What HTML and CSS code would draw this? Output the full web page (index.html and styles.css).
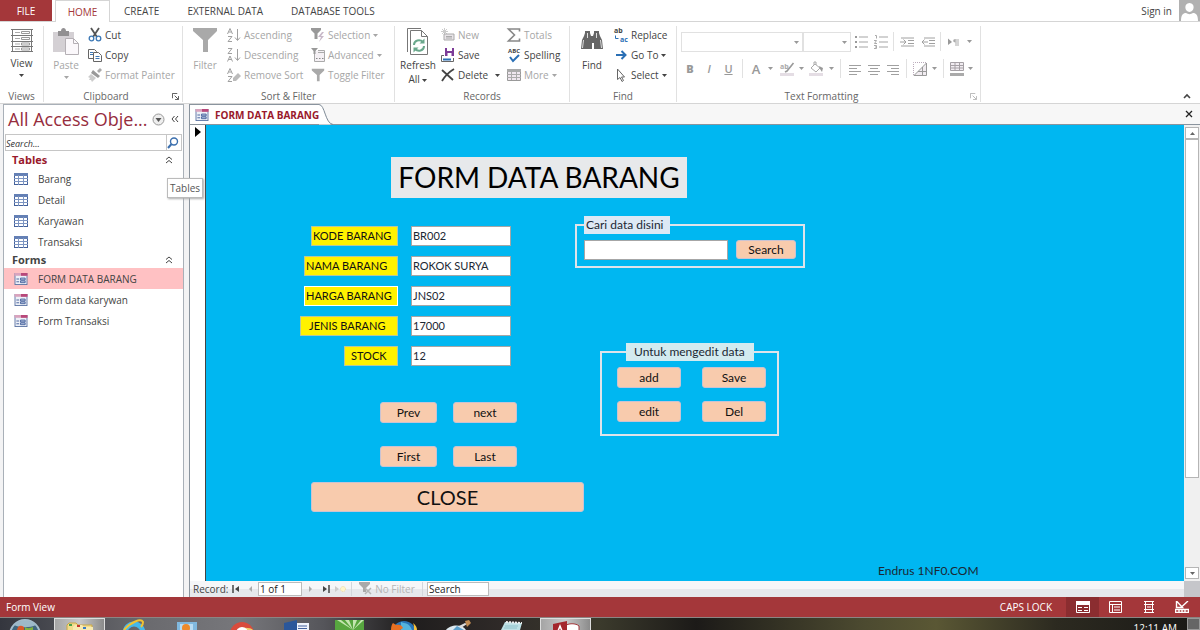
FILE: index.html
```html
<!DOCTYPE html>
<html lang="id">
<head>
    <meta charset="UTF-8">
    <meta name="viewport" content="width=device-width, initial-scale=1.0">
    <title>FORM DATA BARANG</title>
    <link rel="stylesheet" href="styles.css">
</head>
<body>
    <!-- shared icons -->
    <svg class="sprite" width="0" height="0">
        <symbol id="caret" viewBox="0 0 5 3"><path d="M0 0h5L2.5 3z" fill="currentColor"/></symbol>
        <symbol id="funnel" viewBox="0 0 24 24"><path d="M0 0h24v3l-9 9v12h-5V12L0 3z" fill="#a9a9a9"/></symbol>
        <symbol id="tableIcon" viewBox="0 0 14 12">
            <rect x=".5" y=".5" width="13" height="11" fill="#fff" stroke="#44619b"/>
            <path d="M0 0h14v3H0z" fill="#6480b5"/>
            <path d="M0 5.500h14M0 8.500h14M4.500 2v10M9.500 2v10" stroke="#7d95c2"/>
        </symbol>
        <symbol id="formIcon" viewBox="0 0 14 13">
            <rect x=".5" y=".5" width="13" height="12" fill="#eef1f8" stroke="#5f76a5"/>
            <path d="M0 0h14v3H0z" fill="#d9a3bd"/>
            <path d="M7 0h7v3H7z" fill="#b8487a"/>
            <path d="M2 6.500h3M2 9.500h3" stroke="#44619b"/>
            <path d="M6.500 5.500h5v2h-5zM6.500 8.500h5v2h-5z" fill="#c4cfe6" stroke="#44619b"/>
        </symbol>
        <symbol id="chevrons" viewBox="0 0 8 8"><path d="M1 3.500L4 1l3 2.500M1 7l3-2.500L7 7" fill="none" stroke="#444"/></symbol>
        <symbol id="launcher" viewBox="0 0 8 8"><path d="M.5 6V.5H6M3 3l4 4M7.500 3.500v4h-4" fill="none" stroke="currentColor"/></symbol>
    </svg>

    <nav class="tabs">
        <button class="tab file">FILE</button>
        <button class="tab active">HOME</button>
        <button class="tab">CREATE</button>
        <button class="tab">EXTERNAL DATA</button>
        <button class="tab">DATABASE TOOLS</button>
        <a class="signin" href="#">Sign in
            <svg width="21" height="21" viewBox="0 0 21 21"><path d="M0 0h21v21H0z" fill="#b1b1b1"/><path d="M10.500 3c6 0 5 9 0 9s-6-9 0-9zM2 21c0-6 2-8 5-8 2 1.500 5 1.500 7 0 3 0 5 2 5 8z" fill="#fff"/></svg>
        </a>
    </nav>

    <div class="ribbon">
        <section class="group views">
            <div class="tools">
                <button class="big">
                    <svg width="24" height="26" viewBox="0 0 24 26"><g fill="none" stroke="#777"><path d="M2.500 1v23M21.500 1v23M1 1.500h22M1 7.500h22M1 13.500h22M1 18.500h22M1 23.500h22"/><path d="M5 4.500h5M5 10.500h5M5 16h5M5 21h5" stroke="#aaa"/><path d="M11.500 3.500h8v2h-8zM11.500 9.500h8v2h-8zM11.500 15h8v2h-8zM11.500 20h8v2h-8z" stroke="#999"/></g></svg>
                    <span>View</span>
                    <svg class="caret"><use href="#caret"/></svg>
                </button>
            </div>
            <h2>Views</h2>
        </section>
        <section class="group clipboard">
            <div class="tools">
                <button class="big off">
                    <svg width="26" height="28" viewBox="0 0 26 28"><path d="M0 4h21v20H0z" fill="#d4d0d4"/><path d="M5 3h3c0-4 5-4 5 0h3v5H5z" fill="#929092"/><path d="M12.500 10.500h8l5 5v11h-13z" fill="#fbf8fb" stroke="#b5b0b5"/><path d="M20.500 10.500v5h5" fill="none" stroke="#b5b0b5"/></svg>
                    <span>Paste</span>
                    <svg class="caret"><use href="#caret"/></svg>
                </button>
                <div class="col">
                    <button><svg class="ico" viewBox="0 0 14 14"><path d="M3 0l6 9M11 0L5 9" stroke="#555" stroke-width="1.800"/><g fill="none" stroke="#3c78b5" stroke-width="1.300"><circle cx="3.500" cy="10.500" r="2.300"/><circle cx="10.500" cy="10.500" r="2.300"/></g></svg>Cut</button>
                    <button><svg class="ico" viewBox="0 0 14 14"><g fill="#fff" stroke="#666"><path d="M.5 1.500h6l2 2v7h-8z"/><path d="M5.500 4.500h5l3 3v6h-8z"/></g><path d="M2 4.500h3M2 6.500h3M7.500 8.500h4M7.500 10.500h4" stroke="#3c78b5"/></svg>Copy</button>
                    <button class="off"><svg class="ico" viewBox="0 0 14 14"><path d="M9 3l3-3 2 2-3 3z" fill="#aaa"/><path d="M5 2l7 6-2 2-7-5z" fill="#999"/><path d="M3 6l5 4-4 4-1-2-2 0 1-2-2-1z" fill="#ccc"/></svg>Format Painter</button>
                </div>
            </div>
            <h2>Clipboard</h2>
            <svg class="launch"><use href="#launcher"/></svg>
        </section>
        <section class="group sort">
            <div class="tools">
                <button class="big off mid">
                    <svg width="24" height="24"><use href="#funnel"/></svg>
                    <span>Filter</span>
                </button>
                <div class="col">
                    <button class="off"><svg class="ico" viewBox="0 0 14 14"><path d="M.5 6L3 .5 5.500 6M1.500 4h3M1 8.500h4L1 13.500h4M10.500 1v11M8 9.500l2.500 3 2.500-3" fill="none" stroke="#a0a0a0"/></svg>Ascending</button>
                    <button class="off"><svg class="ico" viewBox="0 0 14 14"><path d="M1 .5h4L1 5.500h4M.5 13.500L3 8l2.500 5.500M1.500 11.500h3M10.500 1v11M8 9.500l2.500 3 2.500-3" fill="none" stroke="#a0a0a0"/></svg>Descending</button>
                    <button class="off"><svg class="ico" viewBox="0 0 14 14"><path d="M.5 6L3 .5 5.500 6M1.500 4h3M1 8.500h4L1 13.500h4" fill="none" stroke="#a0a0a0"/><path d="M11 5l3 3-5 5H6v-3z" fill="#bbb"/></svg>Remove Sort</button>
                </div>
                <div class="col">
                    <button class="off"><svg class="ico" viewBox="0 0 14 14"><path d="M0 0h10v2L6.500 5.500V11h-3V5.500L0 2z" fill="#999"/><path d="M11 4l-4 5h3l-2 5 5-6h-3l3-4z" fill="#c8b8c8"/></svg>Selection<svg class="caret"><use href="#caret"/></svg></button>
                    <button class="off"><svg class="ico" viewBox="0 0 14 14"><path d="M3.500 4v9.500h10v-11H7M7 4.500h6" fill="#f4f0f4" stroke="#aaa"/><path d="M0 0h7L4.500 3v3h-2V3z" fill="#999"/><path d="M5 10.500h1.500M8 10.500h1.500M11 10.500h1.500" stroke="#888"/></svg>Advanced<svg class="caret"><use href="#caret"/></svg></button>
                    <button class="off"><svg class="ico" viewBox="0 0 26 26"><use href="#funnel" width="24" height="24" x="1" y="1"/></svg>Toggle Filter</button>
                </div>
            </div>
            <h2>Sort &amp; Filter</h2>
        </section>
        <section class="group records">
            <div class="tools">
                <button class="big">
                    <svg width="24" height="28" viewBox="0 0 24 28"><path d="M1.500 24V.5H15" fill="none" stroke="#777"/><path d="M4.500 2.500h11l6 6v18h-17z" fill="#fff" stroke="#777"/><path d="M15.500 2.500v6h6" fill="none" stroke="#777"/><path d="M8 17c0-5 6-6 9-3M18 18c0 5-6 6-9 3" fill="none" stroke="#6aa88c" stroke-width="2"/><path d="M18.500 10.500v5h-5zM7.500 24.500v-5h5z" fill="#6aa88c"/></svg>
                    <span>Refresh<br>All <svg class="caret"><use href="#caret"/></svg></span>
                </button>
                <div class="col">
                    <button class="off"><svg class="ico" viewBox="0 0 14 14"><path d="M3.500 0v7M0 3.500h7M1 1l5 5M6 1L1 6" stroke="#ccc"/><path d="M3 6h10v6H3z" fill="#e8e4e8" stroke="#aaa"/><path d="M5 8.500h6M5 10h6" stroke="#aaa"/></svg>New</button>
                    <button><svg class="ico" viewBox="0 0 14 14"><path d="M4 0h9v8H4z" fill="#7d3c98"/><path d="M6 0h5v3H6zM6.500 5h4v3h-4z" fill="#fff"/><path d="M3 7.500H.5v6h12V10" fill="none" stroke="#666"/><path d="M2 11.500h8" stroke="#2a6fb5" stroke-width="2"/></svg>Save</button>
                    <button><svg class="ico" viewBox="0 0 14 14"><path d="M1 2l11 10M13 1C8 4 4 8 1 13" fill="none" stroke="#444" stroke-width="1.800"/></svg>Delete<svg class="caret far"><use href="#caret"/></svg></button>
                </div>
                <div class="col">
                    <button class="off"><svg class="ico" viewBox="0 0 14 14"><path d="M12.500 3.500V1H1.500l6 6-6 6h11v-2.500" fill="none" stroke="#888" stroke-width="1.600"/></svg>Totals</button>
                    <button><svg class="ico" viewBox="0 0 14 14"><text x="1" y="5" class="abc">ABC</text><path d="M3 9l3 4 6-6" fill="none" stroke="#2a6fb5" stroke-width="2"/></svg>Spelling</button>
                    <button class="off"><svg class="ico" viewBox="0 0 14 14"><path d="M.5 1.500h13v11H.5z" fill="#eee6ee" stroke="#999"/><path d="M0 1h14v3H0z" fill="#aaa"/><path d="M0 6.500h14M0 9.500h14M4.500 4v8M9.500 4v8" stroke="#aaa"/></svg>More<svg class="caret"><use href="#caret"/></svg></button>
                </div>
            </div>
            <h2>Records</h2>
        </section>
        <section class="group find">
            <div class="tools">
                <button class="big mid">
                    <svg width="24" height="24" viewBox="0 0 24 24"><path d="M5 3h5v2l1 3h2l1-3V3h5v2l1 3 2 4 1 9h-9v-6h-2v6H1l1-9 2-4 1-3z" fill="#666"/><path d="M3.500 12L2.500 20M20.500 12l1 8M7.500 5v5M16.500 5v5" stroke="#ddd"/></svg>
                    <span>Find</span>
                </button>
                <div class="col">
                    <button><svg class="ico" viewBox="0 0 14 14"><text x="0" y="5" class="ab">ab</text><text x="6" y="14" class="ab blue">ac</text><path d="M1.500 7.500v3h3" fill="none" stroke="#2a6fb5"/></svg>Replace</button>
                    <button><svg class="ico" viewBox="0 0 14 14"><path d="M2 7h9M7.500 3l4 4-4 4" fill="none" stroke="#2a6fb5" stroke-width="2"/></svg>Go To<svg class="caret"><use href="#caret"/></svg></button>
                    <button><svg class="ico" viewBox="0 0 14 14"><path d="M3.500 1v10.500l2.500-2 2 4 1.500-1-2-3.500h3z" fill="#fff" stroke="#666"/></svg>Select<svg class="caret"><use href="#caret"/></svg></button>
                </div>
            </div>
            <h2>Find</h2>
        </section>
        <section class="group text">
            <div class="tools">
                <div class="row fonts">
                    <label class="combo"><select aria-label="Font"><option></option></select><svg class="caret"><use href="#caret"/></svg></label>
                    <label class="combo"><select aria-label="Font Size"><option></option></select><svg class="caret"><use href="#caret"/></svg></label>
                    <button aria-label="Bullets"><svg class="ico" viewBox="0 0 14 14"><path d="M5 2h9M5 7h9M5 12h9" stroke="#a5a5a5"/><path d="M1 1h2v2H1zM1 6h2v2H1zM1 11h2v2H1z" fill="#999"/></svg></button>
                    <button aria-label="Numbering"><svg class="ico" viewBox="0 0 14 14"><path d="M5 2h9M5 7h9M5 12h9" stroke="#a5a5a5"/><path d="M1 .5h1.500v3M0 5.500h2.500L.5 8.500H3M0 10.500h2.500v3H0M1 12h1" fill="none" stroke="#aaa"/></svg></button>
                    <i class="sep"></i>
                    <button aria-label="Increase indent"><svg class="ico" viewBox="0 0 14 14"><path d="M1 3h13M8 5.500h6M8 8.500h6M1 11h13M0 7h6M3.500 4.500L6 7 3.500 9.500" fill="none" stroke="#a0a0a0"/></svg></button>
                    <button aria-label="Decrease indent"><svg class="ico" viewBox="0 0 14 14"><path d="M3 3h11M8 5.500h6M8 8.500h6M3 11h11M1 7h6M3.500 4.500L1 7l2.500 2.500" fill="none" stroke="#a0a0a0"/></svg></button>
                    <i class="sep"></i>
                    <button aria-label="Text direction"><svg class="ico" viewBox="0 0 14 14"><path d="M1 3.500L5 7l-4 3z" fill="#999"/><path d="M12 4H8.500c-3 0-3 3.500 0 3.500V4z" fill="#aaa"/><path d="M9 4v7M11 4v7" stroke="#aaa"/></svg></button>
                    <svg class="caret"><use href="#caret"/></svg>
                </div>
                <div class="row styles">
                    <button><b>B</b></button>
                    <button><em>I</em></button>
                    <button><u>U</u></button>
                    <i class="sep"></i>
                    <button class="letter">A</button>
                    <svg class="caret"><use href="#caret"/></svg>
                    <button aria-label="Highlight"><svg class="ico" viewBox="0 0 14 14"><path d="M0 11h14v3H0z" fill="#e4dde4"/><text x="0" y="7" class="ab dim">ab</text><path d="M13.500 1L7 9l-2 1" fill="none" stroke="#999" stroke-width="1.600"/></svg></button>
                    <svg class="caret"><use href="#caret"/></svg>
                    <button aria-label="Fill colour"><svg class="ico" viewBox="0 0 14 14"><path d="M0 11h14v3H0z" fill="#e4dde4"/><path d="M2 6l4-4 5 4-4 4zM5 3V0h2v3" fill="#fff" stroke="#aaa"/><path d="M10 4l4 2-1 4-2-3z" fill="#999"/></svg></button>
                    <svg class="caret"><use href="#caret"/></svg>
                    <i class="sep"></i>
                    <button aria-label="Align left"><svg class="ico" viewBox="0 0 14 14"><path d="M1 3.500h12M1 6.500h8M1 9.500h12M1 12.500h8" stroke="#a0a0a0"/></svg></button>
                    <button aria-label="Center"><svg class="ico" viewBox="0 0 14 14"><path d="M1 3.500h12M3 6.500h8M1 9.500h12M3 12.500h8" stroke="#a0a0a0"/></svg></button>
                    <button aria-label="Align right"><svg class="ico" viewBox="0 0 14 14"><path d="M1 3.500h12M5 6.500h8M1 9.500h12M5 12.500h8" stroke="#a0a0a0"/></svg></button>
                    <i class="sep"></i>
                    <button aria-label="Gridlines"><svg class="ico" viewBox="0 0 14 14"><path d="M.5 13V.5H13" fill="none" stroke="#b9a9b9" stroke-dasharray="1 1"/><path d="M1 13.500L13.500 1v12.500zM5 9.500h8M9.500 5v8" fill="#f1ecf1" stroke="#999"/></svg></button>
                    <svg class="caret"><use href="#caret"/></svg>
                    <i class="sep"></i>
                    <button aria-label="Alternate row colour"><svg class="ico" viewBox="0 0 14 14"><path d="M.5.5h13v8H.5zM0 3.500h14M0 6h14M5 0v8M9.500 0v8" fill="#f1ecf1" stroke="#a5a0a5"/><path d="M0 11h14v3H0z" fill="#aaa"/></svg></button>
                    <svg class="caret"><use href="#caret"/></svg>
                </div>
            </div>
            <h2>Text Formatting</h2>
            <svg class="launch"><use href="#launcher"/></svg>
        </section>
        <button class="collapse" aria-label="Collapse"><svg width="8" height="6" viewBox="0 0 8 6"><path d="M1 5l3-3 3 3" fill="none" stroke="#444" stroke-width="1.600"/></svg></button>
    </div>

    <main class="workspace">
        <aside class="navpane">
            <header>
                <h1>All Access Obje...</h1>
                <button aria-label="Filter objects"><svg width="13" height="13" viewBox="0 0 13 13"><circle cx="6.500" cy="6.500" r="5.500" fill="#eee" stroke="#999"/><path d="M3.500 5h6l-3 4z" fill="#555"/></svg></button>
                <button aria-label="Close pane"><svg width="8" height="8" viewBox="0 0 8 8"><path d="M3.500 1L1 4l2.500 3M7 1L4.500 4 7 7" fill="none" stroke="#444"/></svg></button>
            </header>
            <div class="search">
                <input type="text" placeholder="Search..." aria-label="Search objects">
                <button aria-label="Go"><svg width="12" height="12" viewBox="0 0 12 12"><circle cx="7" cy="4.500" r="3.500" fill="none" stroke="#3b6fae" stroke-width="1.400"/><path d="M4.500 7L1 11" stroke="#3b6fae" stroke-width="2"/></svg></button>
            </div>
            <h3 class="red">Tables <svg width="8" height="8"><use href="#chevrons"/></svg></h3>
            <ul>
                <li><svg class="obj"><use href="#tableIcon"/></svg>Barang</li>
                <li><svg class="obj"><use href="#tableIcon"/></svg>Detail</li>
                <li><svg class="obj"><use href="#tableIcon"/></svg>Karyawan</li>
                <li><svg class="obj"><use href="#tableIcon"/></svg>Transaksi</li>
            </ul>
            <h3>Forms <svg width="8" height="8"><use href="#chevrons"/></svg></h3>
            <ul>
                <li class="selected"><svg class="obj"><use href="#formIcon"/></svg>FORM DATA BARANG</li>
                <li><svg class="obj"><use href="#formIcon"/></svg>Form data karywan</li>
                <li><svg class="obj"><use href="#formIcon"/></svg>Form Transaksi</li>
            </ul>
            <div class="tooltip">Tables</div>
        </aside>

        <div class="document">
            <div class="doctabs">
                <div class="doctab"><svg class="obj"><use href="#formIcon"/></svg>FORM DATA BARANG</div>
                <svg width="14" height="21" viewBox="0 0 14 21"><path d="M0 0c6 0 5 20 13 20.500H0z" fill="#fff"/><path d="M0 .5c6 0 6 19 14 20" fill="none" stroke="#7f8b97"/></svg>
                <button class="closedoc" aria-label="Close form"><svg width="8" height="8" viewBox="0 0 8 8"><path d="M1 1l6 6M7 1L1 7" stroke="#222" stroke-width="1.300"/></svg></button>
            </div>
            <div class="formview">
                <div class="selector"><svg width="6" height="10" viewBox="0 0 6 10"><path d="M0 0l6 5-6 5z"/></svg></div>
                <form class="canvas">
                    <h2 class="title">FORM DATA BARANG</h2>
                    <div class="columns">
                        <div class="left">
                            <div class="fields">
                                <label class="kode" for="kode">KODE BARANG</label><input id="kode" type="text" value="BR002">
                                <label class="nama" for="nama">NAMA BARANG</label><input id="nama" type="text" value="ROKOK SURYA">
                                <label class="nama harga" for="harga">HARGA BARANG</label><input id="harga" type="text" value="JNS02">
                                <label class="jenis" for="jenis">JENIS BARANG</label><input id="jenis" type="text" value="17000">
                                <label class="stock" for="stock">STOCK</label><input id="stock" type="text" value="12">
                            </div>
                            <div class="moves">
                                <button type="button">Prev</button>
                                <button type="button">next</button>
                                <button type="button">First</button>
                                <button type="button">Last</button>
                            </div>
                        </div>
                        <div class="right">
                            <fieldset class="cari">
                                <legend>Cari data disini</legend>
                                <input type="text" aria-label="Cari data disini">
                                <button type="button">Search</button>
                            </fieldset>
                            <fieldset class="edit">
                                <legend>Untuk mengedit data</legend>
                                <button type="button">add</button>
                                <button type="button">Save</button>
                                <button type="button">edit</button>
                                <button type="button">Del</button>
                            </fieldset>
                        </div>
                    </div>
                    <button class="close" type="button">CLOSE</button>
                    <p class="credit">Endrus 1NF0.COM</p>
                </form>
                <div class="scrollbar">
                    <span class="arrow"><svg class="caret up"><use href="#caret"/></svg></span>
                    <span class="thumb"></span>
                    <span class="arrow down"><svg class="caret"><use href="#caret"/></svg></span>
                </div>
            </div>
            <div class="recordbar">
                <label for="rec">Record:</label>
                <button aria-label="First record"><svg width="8" height="8" viewBox="0 0 8 8"><path d="M1 0v8" stroke="#444" stroke-width="1.500"/><path d="M7 1v6L3 4z" fill="#444"/></svg></button>
                <button aria-label="Previous record"><svg width="8" height="8" viewBox="0 0 8 8"><path d="M5 1v6L2 4z" fill="#aaa"/></svg></button>
                <input id="rec" class="rec" type="text" value="1 of 1">
                <button aria-label="Next record"><svg width="8" height="8" viewBox="0 0 8 8"><path d="M2 1v6l3-3z" fill="#aaa"/></svg></button>
                <button aria-label="Last record"><svg width="8" height="8" viewBox="0 0 8 8"><path d="M7 0v8" stroke="#444" stroke-width="1.500"/><path d="M1 1v6l4-3z" fill="#444"/></svg></button>
                <button aria-label="New record"><svg width="12" height="8" viewBox="0 0 12 8"><path d="M0 1v6l4-3z" fill="#ccc"/><circle cx="8" cy="4" r="2.500" fill="#fff5cc" stroke="#ecd9a0" stroke-dasharray="1 1"/></svg></button>
                <button class="nofilter"><svg width="13" height="13" viewBox="0 0 13 13"><path d="M0 0h11v2L7 6v4H4V6L0 2z" fill="#a9a9a9"/><path d="M6 6l6 6M12 6l-6 6" stroke="#b5b5b5" stroke-width="1.500"/></svg>No Filter</button>
                <input class="find" type="text" value="Search" aria-label="Search records">
                <span class="corner"></span>
            </div>
        </div>
    </main>

    <footer class="statusbar">
        <span>Form View</span>
        <span class="caps">CAPS LOCK</span>
        <button class="on" aria-label="Form View"><svg width="14" height="12" viewBox="0 0 14 12"><path d="M.5.5h13v11H.5z" fill="none" stroke="#fff"/><path d="M0 0h14v4H0z" fill="#fff"/><path d="M2 6.500h4M2 9.500h4M8 6.500h4M8 9.500h4" stroke="#fff"/></svg></button>
        <button aria-label="Layout View"><svg width="14" height="12" viewBox="0 0 14 12"><path d="M.5.5h12v11H.5zM.5 3.500h12M3.500 3v9M5 6h6M5 9h6" fill="none" stroke="#fff"/></svg></button>
        <button aria-label="Report View"><svg width="14" height="12" viewBox="0 0 14 12"><path d="M2 .5h10M2 3.500h10M2 8.500h10M2 11.500h10M3.500 0v12M10.500 0v12M5 6h4" fill="none" stroke="#fff"/></svg></button>
        <button aria-label="Design View"><svg width="14" height="12" viewBox="0 0 14 12"><path d="M1.500 0v6.500h6zM13 0L6 6.500M.5 8.500h13v3H.5zM4 9v2M7 9v2M10 9v2" fill="none" stroke="#fff" stroke-width="1.400"/></svg></button>
    </footer>

    <div class="taskbar">
        <span class="orb"><svg width="34" height="12" viewBox="0 0 34 12"><circle cx="17" cy="17" r="15" fill="#41677f" stroke="#a5bccb" stroke-width="2"/><path d="M6 7c4-6 18-6 22 0-6 3-16 3-22 0z" fill="#9db9c9"/><path d="M9 12c1-5 4-5 7-3v3z" fill="#d9582b"/><path d="M17 12V9c3 2 5 1 8 0v3z" fill="#83b13d"/></svg></span>
        <span class="app open"><svg width="34" height="12" viewBox="0 0 34 12"><path d="M4 12V6l2-2h7l2 2h14v6z" fill="#f1dc8c" stroke="#c9a646"/><path d="M10 8l2-2h7l2 2h9v4H10z" fill="#f8eab0"/><path d="M6 5h3v2H6z" fill="#49a24b"/><path d="M14 6h3v2h-3z" fill="#c8372d"/><path d="M20 8h3v2h-3z" fill="#3a7cc4"/></svg></span>
        <span class="app"><svg width="34" height="12" viewBox="0 0 34 12"><circle cx="17" cy="15" r="9" fill="none" stroke="#45b8ea" stroke-width="5"/><path d="M7 12C14 4 24 0 26 4c0 2-1 4-2 5" fill="none" stroke="#f2c230" stroke-width="2"/></svg></span>
        <span class="app"><svg width="34" height="12" viewBox="0 0 34 12"><path d="M6 4h20v8H6z" fill="#80b8de"/><path d="M9 6h13v6H9z" fill="#b9dcf2"/><circle cx="15" cy="10" r="4" fill="#ed8a2b"/></svg></span>
        <span class="app"><svg width="34" height="12" viewBox="0 0 34 12"><circle cx="17" cy="16" r="12" fill="#d94b3c"/><path d="M14 12c0-3 12-3 14 0z" fill="#eed06d"/><circle cx="17" cy="15" r="6" fill="#fff"/></svg></span>
        <span class="app"><svg width="34" height="12" viewBox="0 0 34 12"><path d="M17 5h13v7H17z" fill="#eef2fa"/><path d="M19 8h9M19 10.500h9" stroke="#44619b"/><path d="M5 5l13-3v10H5z" fill="#2b579a"/></svg></span>
        <span class="app"><svg width="34" height="12" viewBox="0 0 34 12"><path d="M2 2h29v10H2z" fill="#57a63f"/><path d="M20 12L4 2h4zM20 12l-8-10h4zM20 12V2h4zM20 12l8-10h3z" fill="#c3e5b0"/></svg></span>
        <span class="app"><svg width="34" height="12" viewBox="0 0 34 12"><circle cx="17" cy="15" r="12" fill="#2774b8"/><path d="M14 4c4 2 8 0 11 8H14z" fill="#54b3dd"/><path d="M4 12c0-4 1-6 2-7l3 2c3-1 6 0 7 3l-3 2z" fill="#e66f22"/><path d="M26 5c3 2 4 5 4 7h-3c0-3 0-5-1-7z" fill="#f4c13d"/></svg></span>
        <span class="app"><svg width="34" height="12" viewBox="0 0 34 12"><path d="M5 12c3-5 16-7 20 0z" fill="#dce9ef"/><path d="M12 12l4-4 7 4z" fill="#5da0cb"/><path d="M18 8l6-3 2 1-6 4z" fill="#ddd"/><path d="M24 3l4-1 2 3-4 4z" fill="#c08b52"/></svg></span>
        <span class="app"><svg width="34" height="12" viewBox="0 0 34 12"><path d="M10 4l17 1-2 7H6z" fill="#bfe1e5"/><path d="M11 4l16 1" stroke="#eee" stroke-width="2" stroke-dasharray="2 1"/><path d="M10 8h13M9 10h13" stroke="#8fc2ca"/></svg></span>
        <span class="app open"><svg width="34" height="12" viewBox="0 0 34 12"><path d="M16 7c3-3 11-3 14 0v5H16z" fill="#fff" stroke="#a4373a"/><path d="M4 5l14-3v10H4z" fill="#a4262c"/><path d="M9 12l2-5 2 5" fill="none" stroke="#fff" stroke-width="1.500"/></svg></span>
        <time>12:11 AM</time>
        <span class="desktop"></span>
    </div>
</body>
</html>
```

FILE: styles.css
```css
* {
    box-sizing: border-box;
}
body {
    margin: 0;
    height: 100vh;
    display: flex;
    flex-direction: column;
    overflow: hidden;
    background: #fff;
    color: #444;
    font: 10px/14px "Open Sans", "Noto Sans", sans-serif;
}
button, input, select {
    font: inherit;
    color: inherit;
    margin: 0;
    padding: 0;
    border: 0;
    background: none;
}
svg {
    flex: none;
    display: block;
}
h1, h2, h3, p, ul {
    margin: 0;
    padding: 0;
    font-weight: normal;
    list-style: none;
}
.sprite {
    position: absolute;
}
.caret {
    display: inline-block;
    width: 5px;
    height: 3px;
}

/* ribbon tabs */
.tabs {
    flex: none;
    display: flex;
    height: 22px;
    border-bottom: 1px solid #d5d5d5;
}
.tab {
    padding: 0 14px;
}
.tab.file {
    width: 52px;
    margin-right: 3px;
    background: #a4373a;
    color: #fff;
}
.tab.active {
    width: 55px;
    height: 22px;
    padding: 0;
    background: #fff;
    border: 1px solid #d5d5d5;
    border-bottom: 0;
    color: #a4373a;
}
.signin {
    display: flex;
    align-items: center;
    gap: 7px;
    margin-left: auto;
    color: #444;
    text-decoration: none;
}

/* ribbon */
.ribbon {
    flex: none;
    display: flex;
    height: 82px;
    padding: 4px 0 1px;
    border-bottom: 1px solid #d5d5d5;
}
.group {
    position: relative;
    display: flex;
    flex-direction: column;
    justify-content: space-between;
    border-right: 1px solid #e1e1e1;
}
.group h2 {
    font-size: 10px;
    line-height: 12px;
    text-align: center;
    color: #666;
}
.clipboard h2, .text h2 {
    padding-right: 14px;
}
.tools {
    display: grid;
}
.views {
    width: 44px;
}
.clipboard {
    width: 139px;
}
.clipboard .tools, .sort .tools, .find .tools {
    grid-template-columns: 44px 1fr;
}
.sort {
    width: 212px;
}
.sort .tools {
    grid-template-columns: 44px 84px 1fr;
}
.records {
    width: 175px;
}
.records .tools {
    grid-template-columns: 46px 66px 1fr;
}
.find.group {
    width: 107px;
}
.text {
    width: 304px;
}
.big {
    display: flex;
    flex-direction: column;
    align-items: center;
    height: 60px;
    padding-top: 2px;
}
.big > svg:first-child {
    margin-bottom: 2px;
}
.big > .caret {
    margin-top: 4px;
}
.big.mid > svg:first-child {
    margin-bottom: 6px;
}
.big br + .caret {
    vertical-align: middle;
}
.col {
    display: grid;
    grid-auto-rows: 20px;
    margin-top: -1px;
}
.col button {
    display: flex;
    align-items: center;
    gap: 3px;
    white-space: nowrap;
}
.col .far {
    margin-left: 4px;
}
.ico {
    width: 14px;
    height: 14px;
    overflow: visible;
}
.off {
    color: #a6a6a6;
}
.abc {
    font-size: 6px;
    font-weight: bold;
    fill: #444;
}
.ab {
    font-size: 7px;
    font-weight: bold;
    fill: #444;
}
.blue {
    fill: #2a6fb5;
}
.dim {
    fill: #aaa;
}
.launch {
    position: absolute;
    right: 3px;
    bottom: 2px;
    width: 7px;
    height: 7px;
}
.text .launch {
    color: #b0b0b0;
}
.text .tools {
    padding: 5px 0 0 4px;
    row-gap: 6px;
    color: #999;
}
.row {
    display: grid;
    align-items: center;
    justify-items: center;
    height: 21px;
}
.row button {
    line-height: 14px;
    font-size: 11px;
    font-weight: 600;
}
.fonts {
    grid-template-columns: 122px 48px 20px 19px 6px 22px 19px 6px 22px 8px;
}
.styles {
    grid-template-columns: 18px 20px 19px 9px 18px 11px 21px 8px 22px 8px 10px 19px 19px 19px 8px 20px 8px 10px 18px 9px;
}
.row .letter {
    font-size: 13px;
}
.sep {
    width: 1px;
    height: 19px;
    background: #e1e1e1;
}
.combo {
    position: relative;
    width: 100%;
}
.combo select {
    display: block;
    appearance: none;
    width: 100%;
    height: 20px;
    border: 1px solid #e1e1e1;
}
.combo .caret {
    position: absolute;
    right: 4px;
    top: 9px;
}
.collapse {
    align-self: flex-end;
    margin: 0 9px 3px auto;
}

/* navigation pane */
.workspace {
    flex: 1;
    min-height: 0;
    display: flex;
    background: #f3f3f4;
}
.navpane {
    position: relative;
    flex: none;
    width: 181px;
    margin: 0 5px 0 3px;
    background: #fff;
    border: 1px solid #a9b0b8;
    border-width: 1px 1px 0;
}
.navpane header {
    display: flex;
    align-items: center;
    gap: 6px;
    height: 28px;
    padding: 0 4px;
}
.navpane h1 {
    flex: 1;
    min-width: 0;
    font-size: 18px;
    line-height: 26px;
    white-space: nowrap;
    color: #962d3e;
}
.search {
    display: flex;
    height: 17px;
    margin: 1px 1px 0;
    border: 1px solid #c6c6c6;
}
.search input {
    flex: 1;
    min-width: 0;
}
.search input::placeholder {
    color: #333;
    font-size: 9px;
    font-style: italic;
}
.search button {
    width: 15px;
    border-left: 1px solid #c6c6c6;
}
.navpane h3 {
    display: flex;
    align-items: center;
    justify-content: space-between;
    height: 17px;
    padding: 0 10px 0 8px;
    font-size: 11px;
    font-weight: bold;
}
.navpane .red {
    color: #99192c;
}
.navpane li {
    display: flex;
    align-items: center;
    gap: 10px;
    height: 21px;
    padding-left: 10px;
}
.navpane ul + h3 {
    height: 16px;
}
.navpane .selected {
    background: #ffc1c3;
}
.obj {
    width: 14px;
    height: 12px;
}
.tooltip {
    position: absolute;
    left: 163px;
    top: 73px;
    z-index: 1;
    padding: 2px;
    background: #fff;
    border: 1px solid #bbb;
    box-shadow: 1px 1px 2px #aaa;
    color: #555;
}

/* document area */
.document {
    flex: 1;
    min-width: 0;
    display: flex;
    flex-direction: column;
    border-left: 1px solid #8a949e;
}
.doctabs {
    flex: none;
    display: flex;
    height: 21px;
    background: #f7f7f7;
    border-bottom: 1px solid #8a949e;
}
.doctab {
    display: flex;
    align-items: center;
    gap: 6px;
    padding-left: 5px;
    background: #fff;
    border-top: 1px solid #8a949e;
    color: #99192c;
    font-weight: bold;
    line-height: 12px;
}
.closedoc {
    margin: 0 7px 0 auto;
}
.formview {
    flex: 1;
    min-height: 0;
    display: flex;
}
.selector {
    flex: none;
    width: 16px;
    padding: 2px 5px;
    background: #fff;
    border-right: 1px solid #444;
}
.canvas {
    flex: 1;
    min-width: 0;
    display: flex;
    flex-direction: column;
    align-items: flex-start;
    padding: 32px 0 2px 94px;
    background: #00b7f1;
    color: #1b2733;
    font: 12px/16px Lato, sans-serif;
}
.title {
    width: 296px;
    margin-left: 91px;
    background: #e7e9eb;
    color: #000;
    font-size: 28px;
    line-height: 41px;
    text-align: center;
    white-space: nowrap;
}
.columns {
    display: grid;
    grid-template-columns: 275px 230px;
    margin-top: 18px;
}
.left {
    padding-top: 10px;
}
.fields {
    display: grid;
    grid-template-columns: 98px 100px;
    grid-auto-rows: 20px;
    gap: 10px 13px;
    font-size: 11px;
}
.fields label {
    justify-self: end;
    padding: 1px;
    background: #fff200;
    border: 1px solid #b5c7a0;
    color: #111;
    white-space: nowrap;
}
.fields .kode {
    width: 87px;
}
.fields .nama {
    width: 94px;
}
.fields .harga {
    border-color: #fff;
}
.fields .jenis {
    width: 98px;
    padding-left: 8px;
}
.fields .stock {
    width: 54px;
    padding-left: 6px;
}
.canvas input {
    height: 20px;
    padding: 0 1px 1px;
    background: #fff;
    border: 1px solid #a6a6a6;
}
.canvas button {
    background: #f8cbad;
    border: 1px solid #c9c3d3;
    border-radius: 3px;
    color: #111;
}
.moves {
    display: grid;
    grid-template-columns: 57px 64px;
    grid-auto-rows: 21px;
    gap: 23px 16px;
    margin: 36px 0 0 80px;
}
.right {
    min-width: 0;
}
fieldset {
    margin: 0;
    min-width: 0;
    border: 2px solid #dfe3ea;
}
legend {
    padding: 0 2px;
    line-height: 18px;
}
.cari {
    display: flex;
    gap: 8px;
    padding: 6px 7px;
}
.cari legend {
    width: 86px;
    background: #dde9f5;
}
.cari input {
    flex: 1;
    width: 0;
}
.cari button {
    width: 60px;
    height: 19px;
}
.edit {
    display: grid;
    grid-template-columns: 64px 64px;
    grid-auto-rows: 21px;
    gap: 13px 21px;
    width: 179px;
    margin: 75px 0 0 25px;
    padding: 6px 0 12px 15px;
}
.edit legend {
    width: 128px;
    margin-left: 9px;
    padding-left: 8px;
    background: #d3ebf0;
}
.canvas .close {
    width: 273px;
    height: 30px;
    margin: 15px 0 0 11px;
    font-size: 20px;
}
.credit {
    margin: auto 0 0 578px;
}
.scrollbar {
    flex: none;
    display: flex;
    flex-direction: column;
    width: 16px;
    padding: 2px 1px;
    background: #f0f0f0;
}
.arrow {
    flex: none;
    display: flex;
    align-items: center;
    justify-content: center;
    height: 12px;
    background: #fff;
    border: 1px solid #b5b5b5;
    color: #666;
}
.up {
    transform: rotate(180deg);
}
.thumb {
    flex: 0 0 75%;
    background: #fff;
    border: 1px solid #b5b5b5;
}
.down {
    margin-top: auto;
}
.recordbar {
    flex: none;
    display: flex;
    align-items: center;
    height: 16px;
    padding-left: 3px;
    background: linear-gradient(#f5f6f8 50%, #e6e8ec 50%);
}
.recordbar button {
    display: flex;
    justify-content: center;
    width: 15px;
}
.recordbar label {
    width: 35px;
}
.recordbar input {
    height: 14px;
    padding: 0 1px;
    background: #fff;
    border: 1px solid #bbb;
    color: #222;
}
.recordbar .rec {
    width: 44px;
    margin-right: 1px;
}
.recordbar .find {
    width: 62px;
}
.recordbar .nofilter {
    width: 72px;
    gap: 3px;
    margin: 0 4px 0 3px;
    border: 1px solid #d3d6db;
    border-width: 0 1px;
    color: #b5b5b5;
}
.corner {
    width: 16px;
    height: 16px;
    margin-left: auto;
    background: #c5c6ca;
}

/* status bar and windows taskbar */
.statusbar {
    flex: none;
    display: flex;
    align-items: center;
    height: 20px;
    padding: 0 2px 0 6px;
    background: #a4373a;
    color: #fff;
}
.caps {
    margin: 0 14px 0 auto;
}
.statusbar button {
    display: flex;
    align-items: center;
    justify-content: center;
    width: 33px;
    height: 20px;
}
.statusbar .on {
    background: #8b2d30;
}
.taskbar {
    flex: none;
    display: flex;
    height: 13px;
    overflow: hidden;
    border-top: 1px solid #8b8583;
    background: linear-gradient(90deg, #34363e, #6a6a6e 12%, #77777b 20%, #55555a 27%, #1f1d1d 34%, #2f2a28 42%, #3b3a2c 50%, #1c1a18 58%, #4c4a30 72%, #5a5734 78%, #2c2a20 88%, #191816);
}
.orb {
    width: 54px;
    padding-left: 8px;
}
.app {
    display: flex;
    justify-content: center;
    width: 51px;
    margin-right: 3px;
}
.open {
    background: linear-gradient(90deg, #a5a5a5, #c9c9c9 50%, #8b8b8b);
    border: 1px solid #ddd;
    border-bottom: 0;
}
.taskbar time {
    margin: 3px 10px 0 auto;
    color: #fff;
}
.desktop {
    width: 13px;
    border: 1px solid #999;
    background: #666;
}
```
